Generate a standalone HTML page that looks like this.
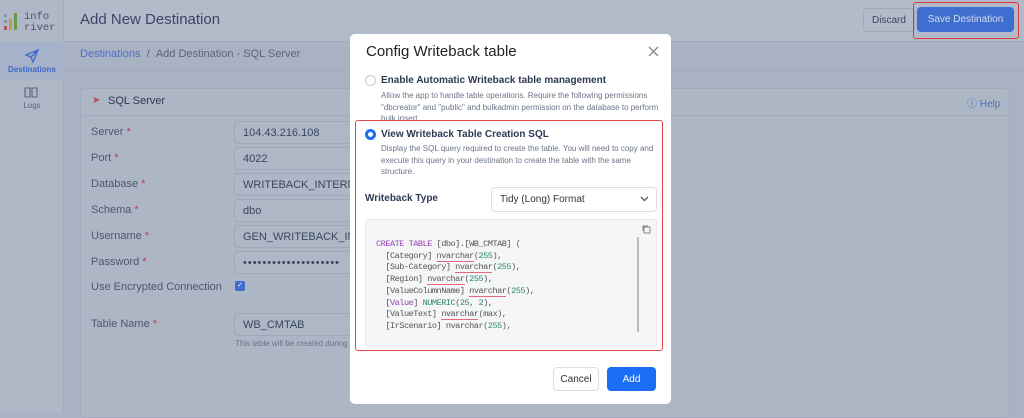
<!DOCTYPE html>
<html><head><meta charset="utf-8"><style>
*{box-sizing:border-box;margin:0;padding:0}
body{width:1024px;height:412px;overflow:hidden;font-family:"Liberation Sans",sans-serif;background:#a9b2c2;position:relative;color:#2e3a55}
.abs{position:absolute}
.side{left:0;top:0;width:64px;height:412px;background:#b0b8c7;border-right:1px solid #a3acbc}
.hdr{left:64px;top:0;width:960px;height:42px;background:#b3bbca;border-bottom:1px solid #a3acbc}
.lbl{font-size:11px;color:#4c5770;left:91px}
.lbl b{color:#b5424c;font-weight:normal}
.inp{left:234px;width:130px;height:23px;border:1px solid #9ea8b9;border-radius:4px;font-size:11px;color:#3a4560;padding:5px 8px;background:#aeb7c6;white-space:nowrap;overflow:hidden}
.modal{left:350px;top:34px;width:321px;height:370px;background:#fff;border-radius:5px}
.code{font-family:"Liberation Mono",monospace;font-size:8.6px;letter-spacing:-0.5px;color:#555;line-height:11.7px;white-space:pre}
.u{border-bottom:1px solid #e8677a}
.n{color:#2e8b6a}.k{color:#9b3fb5}
.btn{display:flex;align-items:center;justify-content:center;border-radius:4px;font-size:10px}
</style></head><body>
<div class="abs side"></div>
<div class="abs" style="left:0;top:42px;width:64px;height:38px;background:#a6b2c9"></div>
<div class="abs" style="left:4px;top:14px;width:3px;height:3px;background:#8a93a3"></div>
<div class="abs" style="left:4px;top:20px;width:3px;height:3px;background:#8a93a3"></div>
<div class="abs" style="left:4px;top:26px;width:3px;height:4px;background:#b2525a"></div>
<div class="abs" style="left:9px;top:19px;width:3px;height:11px;background:#c49a3d"></div>
<div class="abs" style="left:14px;top:13px;width:3px;height:17px;background:#6a9a4a"></div>
<div class="abs" style="left:24px;top:12px;font-family:'Liberation Mono',monospace;font-size:10.5px;line-height:11px;color:#4a5468">info<br>river</div>
<svg class="abs" style="left:24px;top:48px" width="16" height="16" viewBox="0 0 16 16"><path d="M14 2L2 7l5 2 2 5z M14 2L7 9" fill="none" stroke="#3e68c9" stroke-width="1.3"/></svg>
<div class="abs" style="left:0;top:65px;width:64px;text-align:center;font-size:8px;font-weight:bold;color:#3e68c9">Destinations</div>
<svg class="abs" style="left:24px;top:86px" width="14" height="12" viewBox="0 0 14 12"><path d="M1 2h5v9H1z M8 2h5v9H8z" fill="none" stroke="#5a6478" stroke-width="1.1"/></svg>
<div class="abs" style="left:0;top:101px;width:64px;text-align:center;font-size:8px;color:#5a6478">Logs</div>
<div class="abs hdr"></div>
<div class="abs" style="left:80px;top:11px;font-size:15px;color:#3a4666">Add New Destination</div>
<div class="abs btn" style="left:863px;top:8px;width:52px;height:24px;border:1px solid #9ea8b9;color:#3a4560">Discard</div>
<div class="abs btn" style="left:917px;top:7px;width:97px;height:25px;background:#3e6fd0;color:#d5dcea">Save Destination</div>
<div class="abs" style="left:913px;top:2px;width:106px;height:37px;border:1.5px solid #dd3a3a;border-radius:3px"></div>
<div class="abs" style="left:80px;top:48px;font-size:11px;color:#5a6478"><span style="color:#4d6fc4">Destinations</span> &nbsp;/ &nbsp;Add Destination - SQL Server</div>
<div class="abs" style="left:64px;top:71px;width:960px;height:1px;background:#a3acbc"></div>
<div class="abs" style="left:80px;top:88px;width:930px;height:330px;border:1px solid #a0aabb;border-radius:4px;background:#adb6c5"></div>
<div class="abs" style="left:80px;top:115px;width:930px;height:1px;background:#a0aabb"></div>
<div class="abs" style="left:92px;top:95px;font-size:10px;color:#b34a52">➤</div>
<div class="abs" style="left:108px;top:95px;font-size:11px;color:#2e3a55">SQL Server</div>
<div class="abs" style="left:967px;top:95px;font-size:10px;color:#4d6fc4">ⓘ Help</div>
<div class="abs lbl" style="top:126px">Server <b>*</b></div><div class="abs inp" style="top:121px">104.43.216.108</div>
<div class="abs lbl" style="top:152px">Port <b>*</b></div><div class="abs inp" style="top:147px">4022</div>
<div class="abs lbl" style="top:178px">Database <b>*</b></div><div class="abs inp" style="top:173px">WRITEBACK_INTERNAL_D</div>
<div class="abs lbl" style="top:204px">Schema <b>*</b></div><div class="abs inp" style="top:199px">dbo</div>
<div class="abs lbl" style="top:230px">Username <b>*</b></div><div class="abs inp" style="top:225px">GEN_WRITEBACK_INTERN</div>
<div class="abs lbl" style="top:256px">Password <b>*</b></div><div class="abs inp" style="top:251px;letter-spacing:1px">••••••••••••••••••••</div>
<div class="abs lbl" style="top:281px">Use Encrypted Connection</div>
<div class="abs" style="left:235px;top:281px;width:10px;height:10px;background:#3e6fd0;border-radius:2px;color:#fff;font-size:7px;text-align:center;line-height:10px">✓</div>
<div class="abs lbl" style="top:318px">Table Name <b>*</b></div><div class="abs inp" style="top:313px">WB_CMTAB</div>
<div class="abs" style="left:235px;top:339px;font-size:8px;color:#6a7488">This table will be created during</div>

<div class="abs modal"></div>
<div class="abs" style="left:366px;top:43px;font-size:15px;color:#222">Config Writeback table</div>
<svg class="abs" style="left:648px;top:46px" width="11" height="11" viewBox="0 0 11 11"><path d="M1 1L10 10M10 1L1 10" stroke="#888" stroke-width="1.3"/></svg>
<div class="abs" style="left:365px;top:75px;width:11px;height:11px;border:1px solid #ccc;border-radius:50%"></div>
<div class="abs" style="left:381px;top:75px;font-size:10px;font-weight:bold;color:#2e3a55">Enable Automatic Writeback table management</div>
<div class="abs" style="left:381px;top:90px;width:280px;font-size:8px;line-height:11.5px;color:#6a7488">Allow the app to handle table operations. Require the following permissions "dbcreator" and "public" and bulkadmin permission on the database to perform bulk insert.</div>
<div class="abs" style="left:355px;top:120px;width:308px;height:231px;border:1.3px solid #e04848;border-radius:3px;background:#fff"></div>
<div class="abs" style="left:365px;top:129px;width:11px;height:11px;border:3px solid #1a6ef5;border-radius:50%"></div>
<div class="abs" style="left:381px;top:129px;font-size:10px;font-weight:bold;color:#2e3a55">View Writeback Table Creation SQL</div>
<div class="abs" style="left:381px;top:143px;width:278px;font-size:8px;line-height:11.5px;color:#6a7488">Display the SQL query required to create the table. You will need to copy and execute this query in your destination to create the table with the same structure.</div>
<div class="abs" style="left:365px;top:193px;font-size:10px;font-weight:bold;color:#2e3a55">Writeback Type</div>
<div class="abs" style="left:491px;top:187px;width:166px;height:25px;border:1px solid #ddd;border-radius:4px;font-size:10px;color:#333;padding:6px 8px">Tidy (Long) Format</div>
<svg class="abs" style="left:640px;top:196px" width="9" height="6" viewBox="0 0 9 6"><path d="M1 1l3.5 3.5L8 1" fill="none" stroke="#444" stroke-width="1.2"/></svg>
<div class="abs" style="left:365px;top:219px;width:292px;height:128px;background:#f5f6f8;border:1px solid #e5e7eb;border-radius:3px"></div>
<svg class="abs" style="left:641px;top:224px" width="11" height="11" viewBox="0 0 11 11"><rect x="3" y="3" width="6" height="6" fill="none" stroke="#888"/><path d="M2 7V2h5" fill="none" stroke="#888"/></svg>
<div class="abs" style="left:637px;top:237px;width:2px;height:95px;background:#bbb"></div>
<div class="abs code" style="left:376px;top:239px"><span class="k">CREATE TABLE</span> [dbo].[WB_CMTAB] (
  [Category] <span class="u">nvarchar</span>(<span class="n">255</span>),
  [Sub-Category] <span class="u">nvarchar</span>(<span class="n">255</span>),
  [Region] <span class="u">nvarchar</span>(<span class="n">255</span>),
  [ValueColumnName] <span class="u">nvarchar</span>(<span class="n">255</span>),
  [<span class="k">Value</span>] <span class="n">NUMERIC</span>(<span class="n">25</span>, <span class="n">2</span>),
  [ValueText] <span class="u">nvarchar</span>(max),
  [IrScenario] nvarchar(<span class="n">255</span>),</div>
<div class="abs btn" style="left:553px;top:367px;width:46px;height:24px;border:1px solid #ddd;color:#333">Cancel</div>
<div class="abs btn" style="left:607px;top:367px;width:49px;height:24px;background:#1a6ef5;color:#fff">Add</div>
</body></html>
